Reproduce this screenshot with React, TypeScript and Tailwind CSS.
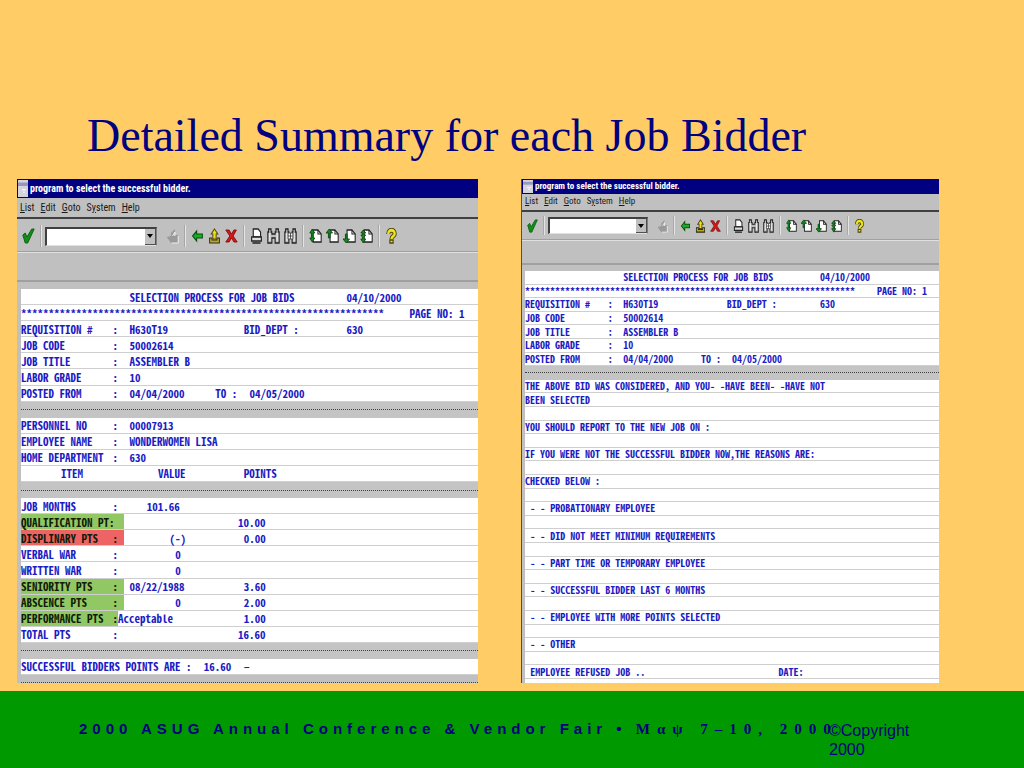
import type { ReactNode } from 'react'
import clsx from 'clsx'

// [start column, text], on the 80 column grid of the list screen
type Cell = [number, string]

interface Row {
  cells?: Cell[]
  rule?: boolean
  mark?: 'green' | 'red'
  markCols?: number
}

const header: Row[] = [
  { cells: [[19, 'SELECTION PROCESS FOR JOB BIDS'], [57, '04/10/2000']] },
  { cells: [[0, '*'.repeat(66)], [68, 'PAGE NO: 1']] },
  { cells: [[0, 'REQUISITION #'], [16, ':'], [19, 'H630T19'], [39, 'BID_DEPT :'], [57, '630']] },
  { cells: [[0, 'JOB CODE'], [16, ':'], [19, '50002614']] },
  { cells: [[0, 'JOB TITLE'], [16, ':'], [19, 'ASSEMBLER B']] },
  { cells: [[0, 'LABOR GRADE'], [16, ':'], [19, '10']] },
  { cells: [[0, 'POSTED FROM'], [16, ':'], [19, '04/04/2000'], [34, 'TO :'], [40, '04/05/2000']] },
  { rule: true },
]

const summaryRows: Row[] = [
  ...header,
  { cells: [[0, 'PERSONNEL NO'], [16, ':'], [19, '00007913']] },
  { cells: [[0, 'EMPLOYEE NAME'], [16, ':'], [19, 'WONDERWOMEN LISA']] },
  { cells: [[0, 'HOME DEPARTMENT'], [16, ':'], [19, '630']] },
  { cells: [[7, 'ITEM'], [24, 'VALUE'], [39, 'POINTS']] },
  { rule: true },
  { cells: [[0, 'JOB MONTHS'], [16, ':'], [22, '101.66']] },
  { cells: [[0, 'QUALIFICATION PT:'], [38, '10.00']], mark: 'green' },
  { cells: [[0, 'DISPLINARY PTS'], [16, ':'], [26, '(-)'], [39, '0.00']], mark: 'red' },
  { cells: [[0, 'VERBAL WAR'], [16, ':'], [27, '0']] },
  { cells: [[0, 'WRITTEN WAR'], [16, ':'], [27, '0']] },
  { cells: [[0, 'SENIORITY PTS'], [16, ':'], [19, '08/22/1988'], [39, '3.60']], mark: 'green' },
  { cells: [[0, 'ABSCENCE PTS'], [16, ':'], [27, '0'], [39, '2.00']], mark: 'green' },
  { cells: [[0, 'PERFORMANCE PTS'], [16, ':'], [17, 'Acceptable'], [39, '1.00']], mark: 'green', markCols: 17 },
  { cells: [[0, 'TOTAL PTS'], [16, ':'], [38, '16.60']] },
  { rule: true },
  { cells: [[0, 'SUCCESSFUL BIDDERS POINTS ARE :'], [32, '16.60'], [39, '–']] },
]

const letterRows: Row[] = [
  ...header,
  { cells: [[0, 'THE ABOVE BID WAS CONSIDERED, AND YOU- -HAVE BEEN- -HAVE NOT']] },
  { cells: [[0, 'BEEN SELECTED']] },
  {},
  { cells: [[0, 'YOU SHOULD REPORT TO THE NEW JOB ON :']] },
  {},
  { cells: [[0, 'IF YOU WERE NOT THE SUCCESSFUL BIDDER NOW,THE REASONS ARE:']] },
  {},
  { cells: [[0, 'CHECKED BELOW :']] },
  {},
  { cells: [[1, '- - PROBATIONARY EMPLOYEE']] },
  {},
  { cells: [[1, '- - DID NOT MEET MINIMUM REQUIREMENTS']] },
  {},
  { cells: [[1, '- - PART TIME OR TEMPORARY EMPLOYEE']] },
  {},
  { cells: [[1, '- - SUCCESSFUL BIDDER LAST 6 MONTHS']] },
  {},
  { cells: [[1, '- - EMPLOYEE WITH MORE POINTS SELECTED']] },
  {},
  { cells: [[1, '- - OTHER']] },
  {},
  { cells: [[1, 'EMPLOYEE REFUSED JOB ..'], [49, 'DATE:']] },
]

const menus = ['List', 'Edit', 'Goto', 'System', 'Help']

function Glyph({ children }: { children: ReactNode }) {
  return (
    <svg viewBox="0 0 16 16" preserveAspectRatio="none" className="h-full w-full" aria-hidden="true">
      {children}
    </svg>
  )
}

const Check = () => (
  <Glyph>
    <path d="M1 7l3-2 2 4 6-8h3L7 15H4z" fill="#109018" stroke="#0a5a10" strokeWidth="1" />
  </Glyph>
)
const Save = () => (
  <Glyph>
    <path d="M1 9l5-1V5l5-4v3l-2 3h6v8H6z" fill="#9a9a9a" />
    <path d="M8 8l3-4v4M7 15h8V8" fill="none" stroke="#f4f4f4" strokeWidth="1" />
  </Glyph>
)
const Back = () => (
  <Glyph>
    <path d="M2 8l5-5v3h7v4H7v3z" fill="#18b020" stroke="#084c0c" strokeWidth="1.2" />
  </Glyph>
)
const Exit = () => (
  <Glyph>
    <path d="M2 10h3v2h6v-2h3v5H2z" fill="#b8a830" stroke="#2c2c18" strokeWidth="1.2" />
    <path d="M8 1l4 5h-2v5H6V6H4z" fill="#f0e020" stroke="#50480c" strokeWidth="1.2" />
  </Glyph>
)
const Cancel = () => (
  <Glyph>
    <path d="M1 2h4l3 4 3-4h3l-4 6 5 6h-4l-3-4-3 4H1l5-6z" fill="#d81818" stroke="#801010" strokeWidth="1" />
  </Glyph>
)
const Print = () => (
  <Glyph>
    <path d="M4 9V1h6l3 3v5z" fill="#fff" stroke="#222" strokeWidth="1.4" />
    <path d="M2 9h12v4H2z" fill="#ddd" stroke="#222" strokeWidth="1.4" />
    <path d="M3 15h10" stroke="#222" strokeWidth="1.5" />
  </Glyph>
)
const Find = ({ next }: { next?: boolean }) => (
  <Glyph>
    <path d="M2 1h3v3h1v2h4V4h1V1h3v3h1v11h-5v-5H6v5H1V4h1z" fill="#bbb" stroke="#222" strokeWidth="1.3" />
    <path d="M3.500 5v8M12.500 5v8" stroke="#fff" strokeWidth="1" />
    {next && <path d="M5 5h6v6H5zM8 5v6M5 8h6" fill="#fff" stroke="#444" strokeWidth="1" />}
  </Glyph>
)
const Page = ({ dir }: { dir: 'first' | 'up' | 'down' | 'last' }) => (
  <Glyph>
    <path d="M5 2h6l4 4v8H5z" fill="#fff" stroke="#222" strokeWidth="1.3" />
    <path d="M11 2v4h4" fill="none" stroke="#222" strokeWidth="1.2" />
    {dir === 'first' && <path d="M4 1l3 4H5v5h2l-3 4-3-4h2V5H1z" fill="#168a20" stroke="#0b4a12" />}
    {dir === 'up' && <path d="M4 1l4 4H5v5H3V5H0z" fill="#168a20" stroke="#0b4a12" />}
    {dir === 'down' && <path d="M4 15l-4-4h3V6h2v5h3z" fill="#168a20" stroke="#0b4a12" />}
    {dir === 'last' && <path d="M4 2l3 3H5v2h2L5 9v2h2l-3 4-3-4h2V9L1 7h2V5H1z" fill="#168a20" stroke="#0b4a12" />}
  </Glyph>
)
const Help = () => (
  <Glyph>
    <path d="M4 6c0-5 8-5 8 0 0 2-4 2-4 5" fill="none" stroke="#4a4608" strokeWidth="5" />
    <path d="M6 12h4v3H6z" fill="#f0e418" stroke="#4a4608" strokeWidth="1.4" />
    <path d="M4 6c0-5 8-5 8 0 0 2-4 2-4 5" fill="none" stroke="#f0e418" strokeWidth="2.800" />
  </Glyph>
)

function Tool({ label, compact, children }: { label: string; compact?: boolean; children: ReactNode }) {
  return (
    <button
      type="button"
      aria-label={label}
      className={clsx('flex shrink-0 items-center justify-center px-[2px]', compact ? 'h-[14px] w-[15px]' : 'h-4 w-[17px]')}
    >
      {children}
    </button>
  )
}

function Divider() {
  return (
    <div className="flex w-2 shrink-0 justify-center self-stretch py-1">
      <div className="w-[2px] border-l border-[#a8a8a8] bg-[#e4e4e4]" />
    </div>
  )
}

function Toolbar({ compact }: { compact?: boolean }) {
  return (
    <div className={clsx('flex shrink-0 items-center border-b border-[#a0a0a0]', compact ? 'h-7 pl-[3px]' : 'h-[33px] pt-[2px] pl-[3px]')}>
      <Tool label="Enter" compact={compact}><Check /></Tool>
      <Divider />
      <div
        className={clsx(
          'mr-[7px] flex shrink-0 border-t-2 border-l-2 border-[#404040] border-r border-b border-r-[#808080] border-b-[#e0e0e0] bg-white',
          compact ? 'h-[17px] w-[100px]' : 'h-[19px] w-28',
        )}
      >
        <input type="text" aria-label="Command" className="min-w-0 flex-1 bg-white px-1 text-[10px] outline-none" />
        <button
          type="button"
          aria-label="Command history"
          className="flex w-[11px] items-center justify-center border-r border-b border-[#505050] bg-[#c0c0c0]"
        >
          <svg viewBox="0 0 6 4" className="h-1 w-[6px]" aria-hidden="true">
            <path d="M0 0h6L3 4z" fill="#000" />
          </svg>
        </button>
      </div>
      <Tool label="Save" compact={compact}><Save /></Tool>
      <Divider />
      <Tool label="Back" compact={compact}><Back /></Tool>
      <Tool label="Exit" compact={compact}><Exit /></Tool>
      <Tool label="Cancel" compact={compact}><Cancel /></Tool>
      <Divider />
      <Tool label="Print" compact={compact}><Print /></Tool>
      <Tool label="Find" compact={compact}><Find /></Tool>
      <Tool label="Find next" compact={compact}><Find next /></Tool>
      <Divider />
      <Tool label="First page" compact={compact}><Page dir="first" /></Tool>
      <Tool label="Previous page" compact={compact}><Page dir="up" /></Tool>
      <Tool label="Next page" compact={compact}><Page dir="down" /></Tool>
      <Tool label="Last page" compact={compact}><Page dir="last" /></Tool>
      <Divider />
      <Tool label="Help" compact={compact}><Help /></Tool>
    </div>
  )
}

function ListRow({ row }: { row: Row }) {
  if (row.rule) {
    return (
      <div className="flex items-center bg-[#c4c4c4]">
        <div className="w-full border-t border-dotted border-[#404040]" />
      </div>
    )
  }
  return (
    <div className="grid grid-cols-[repeat(80,minmax(0,1fr))] grid-rows-1 border-b border-[#cfcfcf] bg-white">
      {row.mark && (
        <div
          className={clsx('row-start-1', row.mark === 'green' ? 'bg-[#92c864]' : 'bg-[#ee6464]')}
          style={{ gridColumn: `1 / span ${row.markCols ?? 18}` }}
        />
      )}
      {row.cells?.map(([col, text]) => (
        <span
          key={col}
          className={clsx('row-start-1 flex items-center whitespace-pre', row.mark && col < 17 && 'text-[#101c08]')}
          style={{ gridColumnStart: col + 1 }}
        >
          {text}
        </span>
      ))}
    </div>
  )
}

function SapWindow({ rows, compact }: { rows: Row[]; compact?: boolean }) {
  return (
    <section className={clsx('flex min-w-0 flex-col overflow-hidden bg-[#c0c0c0]', compact && 'border-l border-[#505050]')}>
      <div
        className={clsx(
          "flex shrink-0 items-center gap-[2px] bg-[#000080] pl-px font-['Roboto_Condensed','Liberation_Sans',sans-serif] font-bold whitespace-nowrap text-white",
          compact ? 'h-[15px] text-[9px]' : 'h-[19px] text-[10px]',
        )}
      >
        <svg viewBox="0 0 10 14" preserveAspectRatio="none" className="h-full w-[10px] py-px" aria-hidden="true">
          <path d="M0 0h10v14H0z" fill="#d4d4dc" />
          <path d="M1 2v3M3 2v3M5 2v3M7 2v3M9 2v3" stroke="#5858a0" strokeWidth="1" />
          <path d="M4 8h4M5 10h2" stroke="#f8f8f8" />
        </svg>
        program to select the successful bidder.
      </div>
      <nav
        className={clsx(
          "flex shrink-0 items-center border-b-2 border-[#404040] pl-[3px] font-['Roboto_Condensed','Liberation_Sans',sans-serif] text-[#181818]",
          compact ? 'h-[18px] gap-[6px] text-[9px]' : 'h-[21px] gap-[6px] text-[10px]',
        )}
      >
        {menus.map(name => (
          <button key={name} type="button">
            {name === 'System' ? <>S<u>y</u>stem</> : <><u>{name[0]}</u>{name.slice(1)}</>}
          </button>
        ))}
      </nav>
      <Toolbar compact={compact} />
      <div className={clsx('shrink-0 border-t border-b-2 border-t-[#e0e0e0] border-b-[#a0a0a0]', compact ? 'h-[25px]' : 'h-[30px]')} />
      <div
        className={clsx(
          "grid flex-1 auto-rows-fr font-['Noto_Sans_Mono_CJK_SC','Liberation_Mono',monospace] font-bold text-[#1c1cc4]",
          compact ? 'mt-[6px] ml-[3px] bg-white pb-1 text-[10px] leading-[12px]' : 'mt-[7px] ml-1 text-[11px] leading-[14px]',
        )}
      >
        {rows.map((row, i) => <ListRow key={i} row={row} />)}
      </div>
      {!compact && <div className="ml-1 h-2 shrink-0 border-b border-dotted border-[#404040]" />}
    </section>
  )
}

export default function App() {
  return (
    <div className="flex min-h-screen flex-col bg-[#ffcc66] text-[#000080]">
      <header className="flex h-[179px] shrink-0 items-end pb-[17px] pl-[87px]">
        <h1 className="font-['Liberation_Serif',serif] text-[46px] leading-[52px] whitespace-nowrap">
          Detailed Summary for each Job Bidder
        </h1>
      </header>
      <main className="grid flex-1 grid-cols-[461fr_418fr] gap-[43px] pr-[85px] pb-2 pl-[17px]">
        <SapWindow rows={summaryRows} />
        <SapWindow rows={letterRows} compact />
      </main>
      <footer className="flex h-[77px] shrink-0 items-start bg-[#009900] pl-[79px] font-['Liberation_Sans',sans-serif] text-base leading-[19px]">
        <p className="w-[750px] shrink-0 pt-7 text-[15px] leading-[19px] font-bold tracking-[5px] whitespace-nowrap">
          2000 ASUG Annual Conference &amp; Vendor Fair •{' '}
          <span className="font-['Liberation_Serif',serif] tracking-[7px]">Μαψ 7–10, 2000</span>
        </p>
        <p className="w-24 pt-[30px]">©Copyright 2000</p>
      </footer>
    </div>
  )
}
